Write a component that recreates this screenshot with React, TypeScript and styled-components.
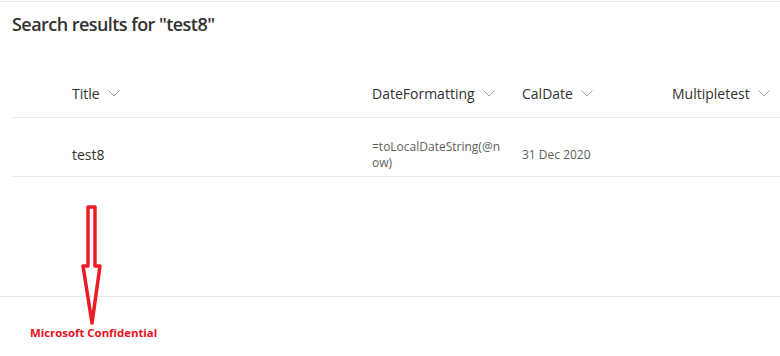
import styled, { createGlobalStyle } from 'styled-components';

const GlobalStyle = createGlobalStyle`
  body {
    margin: 0;
    background: #ffffff;
    font-family: "Open Sans", "Liberation Sans", sans-serif;
    color: #323130;
  }
`;

const Page = styled.div`
  position: relative;
  width: 780px;
  height: 356px;
  display: flex;
  flex-direction: column;
  overflow: hidden;
`;

const TopBar = styled.div`
  margin-top: 1px;
  border-top: 1px solid #ebebeb;
  padding: 8px 12px 0;
`;

const Heading = styled.h1`
  margin: 0;
  font-size: 18px;
  line-height: 28px;
  font-weight: 600;
  letter-spacing: -0.55px;
  color: #323130;
`;

const Results = styled.div`
  margin: 37px 0 0 12px;
`;

const Row = styled.div<{ $header?: boolean }>`
  display: grid;
  grid-template-columns: 60px 300px 150px 150px 1fr;
  align-items: center;
  height: ${({ $header }) => ($header ? '43px' : '59px')};
  padding: ${({ $header }) => ($header ? '0 0 5px' : '16px 0 0')};
  box-sizing: border-box;
  border-bottom: 1px solid #edebe9;
`;

const HeaderCell = styled.div`
  display: flex;
  align-items: center;
  gap: 8px;
  font-size: 14px;
  color: #323130;
  white-space: nowrap;
`;

const Cell = styled.div<{ $small?: boolean }>`
  font-size: ${({ $small }) => ($small ? '12px' : '14px')};
  line-height: ${({ $small }) => ($small ? '16px' : '20px')};
  color: ${({ $small }) => ($small ? '#605e5c' : '#323130')};
`;

const Spacer = styled.div`
  flex: 1;
`;

const Footer = styled.footer`
  height: 60px;
  border-top: 1px solid #e6e6e6;
  padding: 23px 0 0 30px;
  box-sizing: border-box;
`;

const Confidential = styled.span`
  font-size: 11.4px;
  font-weight: 700;
  color: #e81123;
`;

const Arrow = styled.svg`
  position: absolute;
  left: 80px;
  top: 203px;
`;

const Chevron = () => (
  <svg width="12" height="7" viewBox="0 0 12 7">
    <polyline points="0.5,0.5 6,6 11.5,0.5" fill="none" stroke="#a19f9d" strokeWidth="1" />
  </svg>
);

const columns = ['Title', 'DateFormatting', 'CalDate', 'Multipletest'];

export default function App() {
  return (
    <Page>
      <GlobalStyle />
      <TopBar>
        <Heading>Search results for "test8"</Heading>
      </TopBar>
      <Results>
        <Row $header>
          <div />
          {columns.map((c) => (
            <HeaderCell key={c}>
              {c}
              <Chevron />
            </HeaderCell>
          ))}
        </Row>
        <Row>
          <div />
          <Cell>test8</Cell>
          <Cell $small>
            =toLocalDateString(@n
            <br />
            ow)
          </Cell>
          <Cell $small>31 Dec 2020</Cell>
          <div />
        </Row>
      </Results>
      <Spacer />
      <Footer>
        <Confidential>Microsoft Confidential</Confidential>
      </Footer>
      <Arrow width="26" height="124" viewBox="0 0 26 124">
        <path
          d="M8 4 H15 V63 H20 L12 120 L3 63 H8 Z"
          fill="none"
          stroke="#ed1c24"
          strokeWidth="3.5"
          strokeLinejoin="round"
        />
      </Arrow>
    </Page>
  );
}
